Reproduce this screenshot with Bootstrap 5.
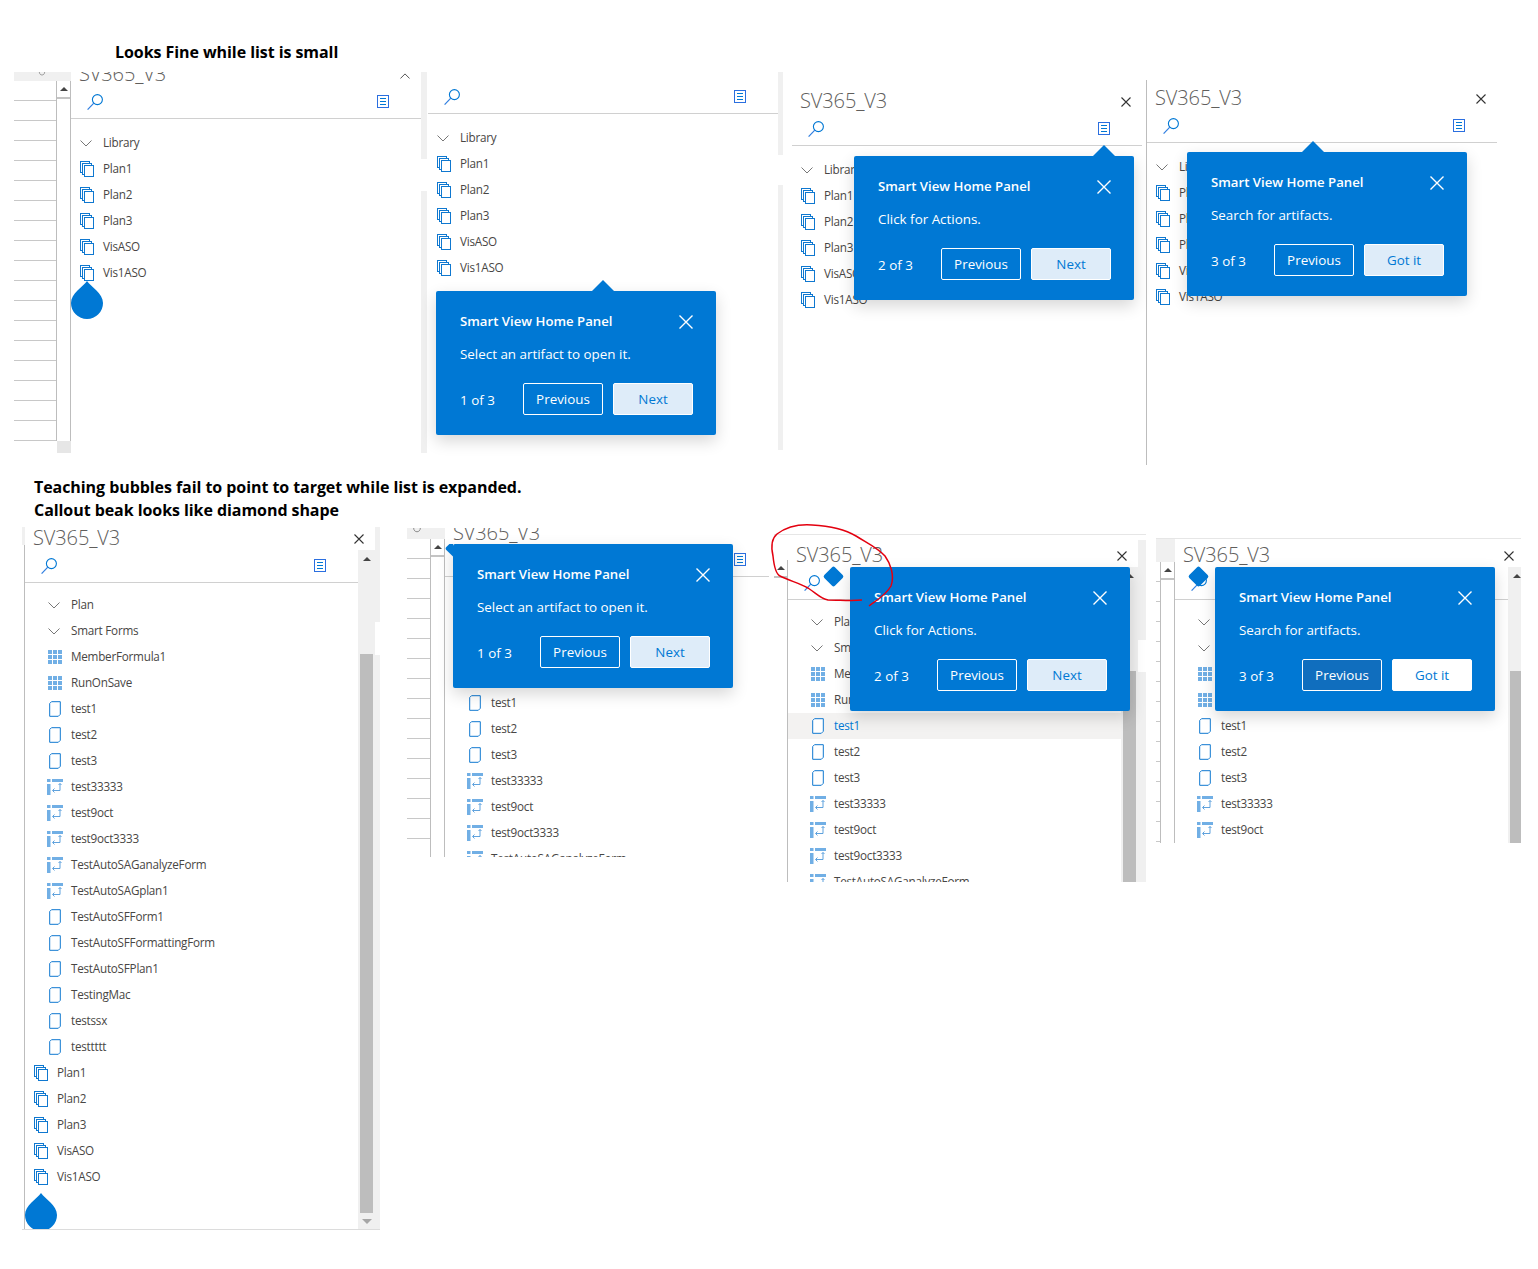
<!DOCTYPE html>
<html lang="en"><head><meta charset="utf-8"><title>Teaching bubbles</title>
<link href="https://cdn.jsdelivr.net/npm/bootstrap@5.3.0/dist/css/bootstrap.min.css" rel="stylesheet">
<style>
body{background:#fff;margin:0;font-family:"Open Sans","Noto Sans",sans-serif;overflow:hidden}
.stage{position:relative;width:1538px;height:1269px;overflow:hidden}
.note{position:absolute;font-weight:700;font-size:16px;line-height:23px;color:#000;white-space:nowrap;letter-spacing:-.004em}
.note-a{left:115px;top:41px}.note-b{left:34px;top:476px}
.shot{position:absolute;display:flex;overflow:hidden;align-items:stretch}
.s-a{left:14px;top:72px;width:413px;height:381px}
.s-b{left:428px;top:72px;width:355px;height:378px}
.s-c{left:783px;top:80px;width:363px;height:370px}
.s-d{left:1146px;top:80px;width:351px;height:385px;border-left:1px solid #bdbdbd}
.s-e{left:22px;top:527px;width:358px;height:703px;border-bottom:1px solid #dcdcdc}
.s-f{left:407px;top:528px;width:362px;height:329px}
.s-g{left:774px;top:534px;width:372px;height:348px;border-top:1px solid #e6e6e6}
.s-h{left:1156px;top:538px;width:365px;height:305px;border-top:1px solid #e6e6e6}
.sheet{display:flex;flex-direction:column;flex:none}
.sh-top{background:#f0f0f0;flex:none;display:flex;align-items:flex-start}
.sh-top svg{margin-left:23px}
.w-f .sh-top svg{margin-left:5px}
.sh-body{display:flex;flex:1 1 auto;min-height:0}
.sh-grid{flex:1 1 auto;background:repeating-linear-gradient(#fff 0 19px,#c8c8c8 19px 20px)}
.sh-scroll{width:15px;flex:none;border-left:1px solid #bdbdbd;border-right:1px solid #bdbdbd;background:#fff}
.sh-up{height:18px;border-bottom:2px solid #c4c4c4;display:flex;align-items:center;justify-content:center}
.sh-end{background:#e6e6e6;height:12px;flex:none}
.tri-up{width:0;height:0;border-left:4px solid transparent;border-right:4px solid transparent;border-bottom:4px solid #444}
.tri-dn{width:0;height:0;border-left:5px solid transparent;border-right:5px solid transparent;border-top:5px solid #a6a6a6}
.w-a{width:57px}.w-a .sh-top{height:9px}.w-a .sh-body{max-height:360px}
.w-f{width:38px}.w-f .sh-top{height:11px}
.w-g{width:14px}.w-g .sh-top{height:25px;background:transparent}.w-g .sh-scroll{width:14px;border-left:0}
.w-h{width:19px}.w-h .sh-top{height:23px}
.w-e{width:3px}.w-e .sh-top{height:18px}.w-e .sh-body{border-right:1px solid #bdbdbd}
.pn{flex:none;width:350px;display:flex;flex-direction:column;background:#fff}
.pn-a{margin-top:-13px}.pn-b{margin-top:-18px}.pn-c{margin-top:6px;margin-left:9px}.pn-d{margin-top:3px}
.pn-e{margin-top:-4px;height:706px}.pn-f{margin-top:-11px;height:340px}.pn-g{margin-top:5px;height:343px}.pn-h{margin-top:1px;height:305px}
.ttl{height:27px;flex:none;padding-left:8px;padding-right:11px;display:flex;justify-content:space-between;align-items:flex-start;font-weight:300;font-size:20px;line-height:30px;color:#605e5c;white-space:nowrap;letter-spacing:-.005em}
.ttl svg{margin-top:11px}
.pn-a .ttl svg{margin-top:14px}
.pn-f .ttl{line-height:32px}
.pb{display:flex;flex:1 1 auto;min-height:0}
.pm{flex:1 1 auto;min-width:0}
.tools{height:33px;border-bottom:1px solid #d0d0d0;padding:8px 32px 0 16px;display:flex;justify-content:space-between;align-items:flex-start}
.tools .i-l{margin-top:1px}
.lst{padding-top:11px}.lst-x{padding-top:9px}.lst-f{padding-top:113px}
.rw{height:26px;display:flex;align-items:center;font-size:11.7px;color:#484644;white-space:nowrap;padding-left:9px;letter-spacing:-.02em}
.rw.n{padding-left:23px}
.ib{width:23px;flex:none;display:flex;align-items:center}
.rw .p{margin-left:1px}.rw .f{margin-left:-1px}
.rw.on{background:#f3f2f1;color:#0078d4}
.vs{width:17px;flex:none;background:#f0f0f0;display:flex;flex-direction:column;align-items:stretch;padding:0 2px}
.vs-up{height:104px;flex:none;display:flex;justify-content:center;padding-top:7px}
.vs-th{flex:1 1 auto;background:#bdbdbd}
.vs-dn{height:16px;flex:none;display:flex;justify-content:center;align-items:center}
.gut{flex:none;background:#f0f0f0}
.g-a{width:6px;background:linear-gradient(#f0f0f0 0 87px,#fff 87px 119px,#f0f0f0 119px)}
.g-b{width:5px;background:linear-gradient(#f0f0f0 0 83px,#fff 83px 113px,#f0f0f0 113px)}
.g-e{width:5px;background:linear-gradient(#f0f0f0 0 95px,#fff 95px 128px,#f0f0f0 128px)}
.g-g{width:8px;background:linear-gradient(#fff 0 5px,#f0f0f0 5px 105px,#fff 105px 137px,#f0f0f0 137px)}
.drop{position:absolute}
.d-a{left:57px;top:209px}.d-e{left:3px;top:666px}
.bub{position:absolute;width:280px;height:144px;background:#0078d4;border-radius:2px;color:#fff;padding:20px 23px 20px 24px;box-shadow:0 6px 16px rgba(0,0,0,.16)}
.b1{left:436px;top:291px}.b2{left:854px;top:156px}.b3{left:1187px;top:152px}
.b4{left:453px;top:544px}.b5{left:850px;top:567px}.b6{left:1215px;top:567px}
.beak{position:absolute;top:-11px;width:22px;height:11px;background:#0078d4;clip-path:polygon(0 100%,50% 0,100% 100%)}
.k1{left:156px}.k2{left:239px}.k3{left:115px}
.kwrap{position:absolute;left:-8px;top:0;width:8px;height:20px;overflow:hidden}
.kwrap i{position:absolute;display:block;left:3px;top:-3px;width:15px;height:15px;background:#0078d4;transform:rotate(45deg);border-radius:2px}
.dia{position:absolute;width:15px;height:15px;background:#0078d4;transform:rotate(45deg);border-radius:2px}
.dia-g{left:825.5px;top:569px}.dia-h{left:1190.5px;top:569px}
.bh{height:20px;display:flex;justify-content:space-between;align-items:center;font-size:13.2px;font-weight:600;line-height:20px}
.bh svg{margin-top:2px}
.bb{margin-top:13px;font-size:13.4px;line-height:20px;height:20px}
.bf{margin-top:19px;display:flex;align-items:center;gap:10px}
.bc{font-size:13.4px;margin-right:auto;padding-top:2px}
.bub .btn{width:80px;height:32px;padding:0;border-radius:2px;font-size:13.4px;line-height:29px}
.btn.b-o{background:transparent;color:#fff;border:1px solid #fff}
.btn.b-d{background:#106ebe;color:#fff;border:1px solid #fff}
.btn.b-n{background:#deecf9;color:#0078d4;border:1px solid #fff}
.btn.b-w{background:#fff;color:#0078d4;border:1px solid #fff}
.ink{position:absolute;left:0;top:0;pointer-events:none}
</style></head>
<body>
<svg width="0" height="0" class="position-absolute">
<symbol id="search" viewBox="0 0 16 16"><circle cx="10.400" cy="5.600" r="5" fill="none" stroke="#0078d4" stroke-width="1.100"/><path d="M6.800 9.200 .6 15.600" fill="none" stroke="#2f7ee0" stroke-width="1.200"/></symbol>
<symbol id="list" viewBox="0 0 12 13"><rect x=".5" y=".5" width="11" height="12" fill="#fff" stroke="#2b6fe0"/><path d="M3 3.500h6M3 6.500h6M3 9.500h6" stroke="#0078d4"/></symbol>
<symbol id="chev" viewBox="0 0 12 7"><path d="M.5.500 6 6l5.500-5.500" fill="none" stroke="#777"/></symbol>
<symbol id="x" viewBox="0 0 10 10"><path d="M.5.500l9 9m0-9-9 9" fill="none" stroke="#333" stroke-width="1.100"/></symbol>
<symbol id="xw" viewBox="0 0 14 14"><path d="M.5.500l13 13m0-13-13 13" fill="none" stroke="#fff" stroke-width="1.400"/></symbol>
<symbol id="stack" viewBox="0 0 14 16"><g fill="#fff" stroke="#0f78d0"><rect x=".5" y=".5" width="9" height="11"/><rect x="2.500" y="2.500" width="9" height="11"/><rect x="4.500" y="4.500" width="9" height="11"/></g></symbol>
<symbol id="page" viewBox="0 0 12 16"><path d="M2.500.7H11.300V13.300L9.300 15.300H.7V2.500Z" fill="#fff" stroke="#0f78d0" stroke-linejoin="round"/></symbol>
<symbol id="grid" viewBox="0 0 14 14"><path d="M0 0h4v4H0zM5 0h4v4H5zM10 0h4v4h-4zM0 5h4v4H0zM5 5h4v4H5zM10 5h4v4h-4zM0 10h4v4H0zM5 10h4v4H5zM10 10h4v4h-4z" fill="#71afe5"/></symbol>
<symbol id="form" viewBox="0 0 16 16"><path d="M0 0h3.500v3H0zM5 0h11v3H5zM0 5h3.500v11H0z" fill="#71afe5"/><path d="M13 4.500v7H6M11.500 6 13 4.500 14.500 6M7.500 9.500 5.500 11.500 7.500 13.500" fill="none" stroke="#4d97d9" stroke-width=".9"/></symbol>
<symbol id="drip" viewBox="0 0 32 38"><path d="M16 0C20 6 32 12 32 22A16 16 0 0 1 0 22C0 12 12 6 16 0Z" fill="#0078d4"/></symbol>
<symbol id="mini" viewBox="0 0 10 6"><path d="M1 0C1 3 3 4.500 5 4.500S9 3 9 0" fill="none" stroke="#777"/></symbol>
</svg>
<main class="stage">
<div class="note note-a">Looks Fine while list is small</div>
<div class="note note-b">Teaching bubbles fail to point to target while list is expanded.<br>Callout beak looks like diamond shape</div>

<section class="shot s-a">
 <div class="sheet w-a"><div class="sh-top"><svg width="10" height="4"><use href="#mini"/></svg></div><div class="sh-body"><div class="sh-grid"></div><div class="sh-scroll"><div class="sh-up"><span class="tri-up"></span></div></div></div><div class="sh-end ms-auto w-25"></div></div>
 <div class="pn pn-a"><div class="ttl"><span>SV365_V3</span><svg width="10" height="6" viewBox="0 0 12 7"><path d="M.5 6.500 6 1l5.500 5.500" fill="none" stroke="#333"/></svg></div>
  <div class="pb"><div class="pm"><div class="tools"><svg width="16" height="16"><use href="#search"/></svg><svg class="i-l" width="12" height="13"><use href="#list"/></svg></div>
  <div class="lst"><div class="rw"><span class="ib"><svg width="12" height="7"><use href="#chev"/></svg></span>Library</div>
  <div class="rw"><span class="ib"><svg width="14" height="16"><use href="#stack"/></svg></span>Plan1</div>
  <div class="rw"><span class="ib"><svg width="14" height="16"><use href="#stack"/></svg></span>Plan2</div>
  <div class="rw"><span class="ib"><svg width="14" height="16"><use href="#stack"/></svg></span>Plan3</div>
  <div class="rw"><span class="ib"><svg width="14" height="16"><use href="#stack"/></svg></span>VisASO</div>
  <div class="rw"><span class="ib"><svg width="14" height="16"><use href="#stack"/></svg></span>Vis1ASO</div></div></div></div></div>
 <div class="gut g-a"></div>
 <svg class="drop d-a" width="32" height="38"><use href="#drip"/></svg>
</section>

<section class="shot s-b">
 <div class="pn pn-b"><div class="ttl"></div>
  <div class="pb"><div class="pm"><div class="tools"><svg width="16" height="16"><use href="#search"/></svg><svg class="i-l" width="12" height="13"><use href="#list"/></svg></div>
  <div class="lst"><div class="rw"><span class="ib"><svg width="12" height="7"><use href="#chev"/></svg></span>Library</div>
  <div class="rw"><span class="ib"><svg width="14" height="16"><use href="#stack"/></svg></span>Plan1</div>
  <div class="rw"><span class="ib"><svg width="14" height="16"><use href="#stack"/></svg></span>Plan2</div>
  <div class="rw"><span class="ib"><svg width="14" height="16"><use href="#stack"/></svg></span>Plan3</div>
  <div class="rw"><span class="ib"><svg width="14" height="16"><use href="#stack"/></svg></span>VisASO</div>
  <div class="rw"><span class="ib"><svg width="14" height="16"><use href="#stack"/></svg></span>Vis1ASO</div></div></div></div></div>
 <div class="gut g-b"></div>
</section>

<section class="shot s-c">
 <div class="pn pn-c"><div class="ttl"><span>SV365_V3</span><svg width="10" height="10"><use href="#x"/></svg></div>
  <div class="pb"><div class="pm"><div class="tools"><svg width="16" height="16"><use href="#search"/></svg><svg class="i-l" width="12" height="13"><use href="#list"/></svg></div>
  <div class="lst"><div class="rw"><span class="ib"><svg width="12" height="7"><use href="#chev"/></svg></span>Library</div>
  <div class="rw"><span class="ib"><svg width="14" height="16"><use href="#stack"/></svg></span>Plan1</div>
  <div class="rw"><span class="ib"><svg width="14" height="16"><use href="#stack"/></svg></span>Plan2</div>
  <div class="rw"><span class="ib"><svg width="14" height="16"><use href="#stack"/></svg></span>Plan3</div>
  <div class="rw"><span class="ib"><svg width="14" height="16"><use href="#stack"/></svg></span>VisASO</div>
  <div class="rw"><span class="ib"><svg width="14" height="16"><use href="#stack"/></svg></span>Vis1ASO</div></div></div></div></div>
</section>

<section class="shot s-d">
 <div class="pn pn-d"><div class="ttl"><span>SV365_V3</span><svg width="10" height="10"><use href="#x"/></svg></div>
  <div class="pb"><div class="pm"><div class="tools"><svg width="16" height="16"><use href="#search"/></svg><svg class="i-l" width="12" height="13"><use href="#list"/></svg></div>
  <div class="lst"><div class="rw"><span class="ib"><svg width="12" height="7"><use href="#chev"/></svg></span>Library</div>
  <div class="rw"><span class="ib"><svg width="14" height="16"><use href="#stack"/></svg></span>Plan1</div>
  <div class="rw"><span class="ib"><svg width="14" height="16"><use href="#stack"/></svg></span>Plan2</div>
  <div class="rw"><span class="ib"><svg width="14" height="16"><use href="#stack"/></svg></span>Plan3</div>
  <div class="rw"><span class="ib"><svg width="14" height="16"><use href="#stack"/></svg></span>VisASO</div>
  <div class="rw"><span class="ib"><svg width="14" height="16"><use href="#stack"/></svg></span>Vis1ASO</div></div></div></div></div>
</section>

<section class="shot s-e">
 <div class="sheet w-e"><div class="sh-top"></div><div class="sh-body"></div></div>
 <div class="pn pn-e"><div class="ttl"><span>SV365_V3</span><svg width="10" height="10"><use href="#x"/></svg></div>
  <div class="pb"><div class="pm"><div class="tools"><svg width="16" height="16"><use href="#search"/></svg><svg class="i-l" width="12" height="13"><use href="#list"/></svg></div>
  <div class="lst-x">
  <div class="rw n"><span class="ib"><svg width="12" height="7"><use href="#chev"/></svg></span>Plan</div>
  <div class="rw n"><span class="ib"><svg width="12" height="7"><use href="#chev"/></svg></span>Smart Forms</div>
  <div class="rw n"><span class="ib"><svg width="14" height="14"><use href="#grid"/></svg></span>MemberFormula1</div>
  <div class="rw n"><span class="ib"><svg width="14" height="14"><use href="#grid"/></svg></span>RunOnSave</div>
  <div class="rw n"><span class="ib"><svg class="p" width="12" height="16"><use href="#page"/></svg></span>test1</div>
  <div class="rw n"><span class="ib"><svg class="p" width="12" height="16"><use href="#page"/></svg></span>test2</div>
  <div class="rw n"><span class="ib"><svg class="p" width="12" height="16"><use href="#page"/></svg></span>test3</div>
  <div class="rw n"><span class="ib"><svg class="f" width="16" height="16"><use href="#form"/></svg></span>test33333</div>
  <div class="rw n"><span class="ib"><svg class="f" width="16" height="16"><use href="#form"/></svg></span>test9oct</div>
  <div class="rw n"><span class="ib"><svg class="f" width="16" height="16"><use href="#form"/></svg></span>test9oct3333</div>
  <div class="rw n"><span class="ib"><svg class="f" width="16" height="16"><use href="#form"/></svg></span>TestAutoSAGanalyzeForm</div>
  <div class="rw n"><span class="ib"><svg class="f" width="16" height="16"><use href="#form"/></svg></span>TestAutoSAGplan1</div>
  <div class="rw n"><span class="ib"><svg class="p" width="12" height="16"><use href="#page"/></svg></span>TestAutoSFForm1</div>
  <div class="rw n"><span class="ib"><svg class="p" width="12" height="16"><use href="#page"/></svg></span>TestAutoSFFormattingForm</div>
  <div class="rw n"><span class="ib"><svg class="p" width="12" height="16"><use href="#page"/></svg></span>TestAutoSFPlan1</div>
  <div class="rw n"><span class="ib"><svg class="p" width="12" height="16"><use href="#page"/></svg></span>TestingMac</div>
  <div class="rw n"><span class="ib"><svg class="p" width="12" height="16"><use href="#page"/></svg></span>testssx</div>
  <div class="rw n"><span class="ib"><svg class="p" width="12" height="16"><use href="#page"/></svg></span>testtttt</div>
  <div class="rw"><span class="ib"><svg width="14" height="16"><use href="#stack"/></svg></span>Plan1</div>
  <div class="rw"><span class="ib"><svg width="14" height="16"><use href="#stack"/></svg></span>Plan2</div>
  <div class="rw"><span class="ib"><svg width="14" height="16"><use href="#stack"/></svg></span>Plan3</div>
  <div class="rw"><span class="ib"><svg width="14" height="16"><use href="#stack"/></svg></span>VisASO</div>
  <div class="rw"><span class="ib"><svg width="14" height="16"><use href="#stack"/></svg></span>Vis1ASO</div>
  </div></div>
  <div class="vs"><div class="vs-up"><span class="tri-up"></span></div><div class="vs-th"></div><div class="vs-dn"><span class="tri-dn"></span></div></div></div></div>
 <div class="gut g-e"></div>
 <svg class="drop d-e" width="32" height="38"><use href="#drip"/></svg>
</section>

<section class="shot s-f">
 <div class="sheet w-f"><div class="sh-top"><svg width="10" height="5"><use href="#mini"/></svg></div><div class="sh-body"><div class="sh-grid"></div><div class="sh-scroll"><div class="sh-up"><span class="tri-up"></span></div></div></div></div>
 <div class="pn pn-f"><div class="ttl"><span>SV365_V3</span></div>
  <div class="pb"><div class="pm"><div class="tools"><svg width="16" height="16"><use href="#search"/></svg><svg class="i-l" width="12" height="13"><use href="#list"/></svg></div>
  <div class="lst-f">
  <div class="rw n"><span class="ib"><svg class="p" width="12" height="16"><use href="#page"/></svg></span>test1</div>
  <div class="rw n"><span class="ib"><svg class="p" width="12" height="16"><use href="#page"/></svg></span>test2</div>
  <div class="rw n"><span class="ib"><svg class="p" width="12" height="16"><use href="#page"/></svg></span>test3</div>
  <div class="rw n"><span class="ib"><svg class="f" width="16" height="16"><use href="#form"/></svg></span>test33333</div>
  <div class="rw n"><span class="ib"><svg class="f" width="16" height="16"><use href="#form"/></svg></span>test9oct</div>
  <div class="rw n"><span class="ib"><svg class="f" width="16" height="16"><use href="#form"/></svg></span>test9oct3333</div>
  <div class="rw n"><span class="ib"><svg class="f" width="16" height="16"><use href="#form"/></svg></span>TestAutoSAGanalyzeForm</div>
  </div></div>
  <div class="vs"></div></div></div>
</section>

<section class="shot s-g">
 <div class="sheet w-g"><div class="sh-top"></div><div class="sh-body"><div class="sh-scroll"><div class="sh-up"><span class="tri-up"></span></div></div></div></div>
 <div class="pn pn-g"><div class="ttl"><span>SV365_V3</span><svg width="10" height="10"><use href="#x"/></svg></div>
  <div class="pb"><div class="pm"><div class="tools"><svg width="16" height="16"><use href="#search"/></svg><svg class="i-l" width="12" height="13"><use href="#list"/></svg></div>
  <div class="lst-x">
  <div class="rw n"><span class="ib"><svg width="12" height="7"><use href="#chev"/></svg></span>Plan</div>
  <div class="rw n"><span class="ib"><svg width="12" height="7"><use href="#chev"/></svg></span>Smart Forms</div>
  <div class="rw n"><span class="ib"><svg width="14" height="14"><use href="#grid"/></svg></span>MemberFormula1</div>
  <div class="rw n"><span class="ib"><svg width="14" height="14"><use href="#grid"/></svg></span>RunOnSave</div>
  <div class="rw n on"><span class="ib"><svg class="p" width="12" height="16"><use href="#page"/></svg></span>test1</div>
  <div class="rw n"><span class="ib"><svg class="p" width="12" height="16"><use href="#page"/></svg></span>test2</div>
  <div class="rw n"><span class="ib"><svg class="p" width="12" height="16"><use href="#page"/></svg></span>test3</div>
  <div class="rw n"><span class="ib"><svg class="f" width="16" height="16"><use href="#form"/></svg></span>test33333</div>
  <div class="rw n"><span class="ib"><svg class="f" width="16" height="16"><use href="#form"/></svg></span>test9oct</div>
  <div class="rw n"><span class="ib"><svg class="f" width="16" height="16"><use href="#form"/></svg></span>test9oct3333</div>
  <div class="rw n"><span class="ib"><svg class="f" width="16" height="16"><use href="#form"/></svg></span>TestAutoSAGanalyzeForm</div>
  </div></div>
  <div class="vs"><div class="vs-up"><span class="tri-up"></span></div><div class="vs-th"></div></div></div></div>
 <div class="gut g-g"></div>
</section>

<section class="shot s-h">
 <div class="sheet w-h"><div class="sh-top"></div><div class="sh-body"><div class="sh-grid"></div><div class="sh-scroll"><div class="sh-up"><span class="tri-up"></span></div></div></div></div>
 <div class="pn pn-h"><div class="ttl"><span>SV365_V3</span><svg width="10" height="10"><use href="#x"/></svg></div>
  <div class="pb"><div class="pm"><div class="tools"><svg width="16" height="16"><use href="#search"/></svg><svg class="i-l" width="12" height="13"><use href="#list"/></svg></div>
  <div class="lst-x">
  <div class="rw n"><span class="ib"><svg width="12" height="7"><use href="#chev"/></svg></span></div>
  <div class="rw n"><span class="ib"><svg width="12" height="7"><use href="#chev"/></svg></span></div>
  <div class="rw n"><span class="ib"><svg width="14" height="14"><use href="#grid"/></svg></span></div>
  <div class="rw n"><span class="ib"><svg width="14" height="14"><use href="#grid"/></svg></span></div>
  <div class="rw n"><span class="ib"><svg class="p" width="12" height="16"><use href="#page"/></svg></span>test1</div>
  <div class="rw n"><span class="ib"><svg class="p" width="12" height="16"><use href="#page"/></svg></span>test2</div>
  <div class="rw n"><span class="ib"><svg class="p" width="12" height="16"><use href="#page"/></svg></span>test3</div>
  <div class="rw n"><span class="ib"><svg class="f" width="16" height="16"><use href="#form"/></svg></span>test33333</div>
  <div class="rw n"><span class="ib"><svg class="f" width="16" height="16"><use href="#form"/></svg></span>test9oct</div>
  </div></div>
  <div class="vs"><div class="vs-up"><span class="tri-up"></span></div><div class="vs-th"></div></div></div></div>
</section>

<span class="dia dia-g"></span><span class="dia dia-h"></span>

<aside class="bub b1"><span class="beak k1"></span><div class="bh"><span>Smart View Home Panel</span><svg width="14" height="14"><use href="#xw"/></svg></div><div class="bb">Select an artifact to open it.</div><div class="bf"><span class="bc">1 of 3</span><button class="btn b-o">Previous</button><button class="btn b-n">Next</button></div></aside>
<aside class="bub b2"><span class="beak k2"></span><div class="bh"><span>Smart View Home Panel</span><svg width="14" height="14"><use href="#xw"/></svg></div><div class="bb">Click for Actions.</div><div class="bf"><span class="bc">2 of 3</span><button class="btn b-o">Previous</button><button class="btn b-n">Next</button></div></aside>
<aside class="bub b3"><span class="beak k3"></span><div class="bh"><span>Smart View Home Panel</span><svg width="14" height="14"><use href="#xw"/></svg></div><div class="bb">Search for artifacts.</div><div class="bf"><span class="bc">3 of 3</span><button class="btn b-o">Previous</button><button class="btn b-n">Got it</button></div></aside>
<aside class="bub b4"><span class="kwrap"><i></i></span><div class="bh"><span>Smart View Home Panel</span><svg width="14" height="14"><use href="#xw"/></svg></div><div class="bb">Select an artifact to open it.</div><div class="bf"><span class="bc">1 of 3</span><button class="btn b-o">Previous</button><button class="btn b-n">Next</button></div></aside>
<aside class="bub b5"><div class="bh"><span>Smart View Home Panel</span><svg width="14" height="14"><use href="#xw"/></svg></div><div class="bb">Click for Actions.</div><div class="bf"><span class="bc">2 of 3</span><button class="btn b-o">Previous</button><button class="btn b-n">Next</button></div></aside>
<aside class="bub b6"><div class="bh"><span>Smart View Home Panel</span><svg width="14" height="14"><use href="#xw"/></svg></div><div class="bb">Search for artifacts.</div><div class="bf"><span class="bc">3 of 3</span><button class="btn b-d">Previous</button><button class="btn b-w">Got it</button></div></aside>

<svg class="ink" width="1538" height="1269"><path d="M869 606C877 600 886 595 891 586C895 575 890 563 885 556C878 548 867 543 856 536C846 530 830 526 812 525C798 524 785 528 777 534C771 539 771 547 773 556C774 566 776 574 780 576C790 581 799 583 808 588C817 594 821 599 828 600C840 600 852 601 862 600" fill="none" stroke="#e3000f" stroke-width="1.500"/></svg>
</main>
<script src="https://cdn.jsdelivr.net/npm/bootstrap@5.3.0/dist/js/bootstrap.bundle.min.js"></script>
</body></html>
